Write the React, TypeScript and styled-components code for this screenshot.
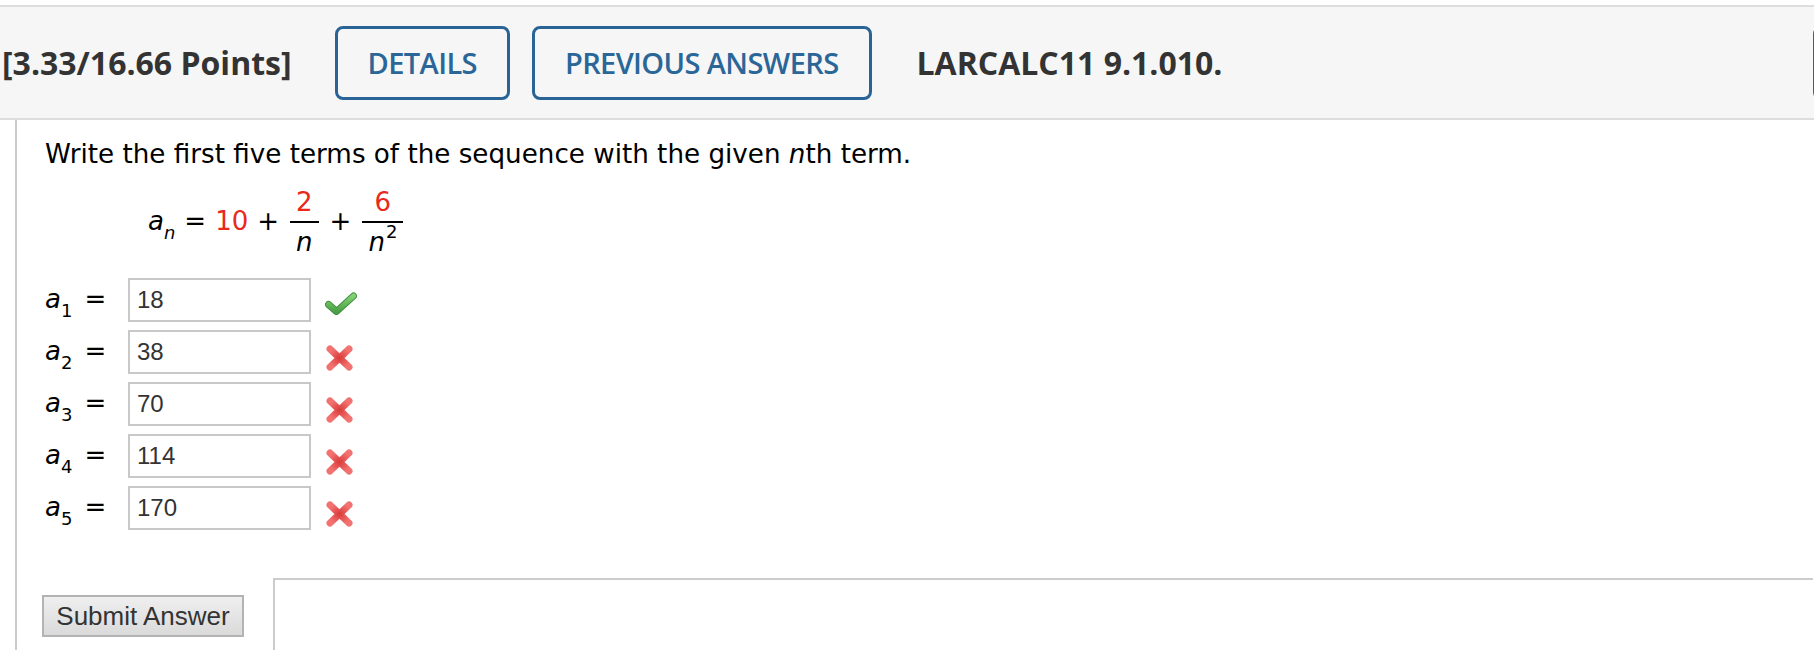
import React from "react";
import styled, { createGlobalStyle } from "styled-components";

const Global = createGlobalStyle`
  html, body { margin: 0; padding: 0; background: #ffffff; }
  body { overflow: hidden; width: 1814px; height: 650px; }
  * { box-sizing: border-box; }
`;

const Page = styled.div`
  padding-top: 5px;
  width: 1814px;
  height: 650px;
  display: flex;
  flex-direction: column;
`;

const Header = styled.div`
  height: 115px;
  flex-shrink: 0;
  background: #f6f6f6;
  border-top: 2px solid #dddddd;
  border-bottom: 2px solid #dddddd;
  display: flex;
  align-items: center;
  padding-left: 2px;
  overflow: hidden;
  font-family: "Open Sans", "Liberation Sans", sans-serif;
`;

const HeaderTitle = styled.div<{ $gap?: number }>`
  font-size: 32px;
  font-weight: 700;
  color: #333333;
  white-space: nowrap;
  flex-shrink: 0;
  margin-left: ${(p) => p.$gap ?? 0}px;
`;

const OutlineButton = styled.button<{ $gap: number; $width?: number }>`
  flex-shrink: 0;
  margin-left: ${(p) => p.$gap}px;
  ${(p) => (p.$width ? `width: ${p.$width}px;` : "")}
  height: 74px;
  padding: 0 30px;
  border: 3px solid #2a6496;
  border-radius: 8px;
  background: transparent;
  color: #2b6698;
  font-family: "Open Sans", "Liberation Sans", sans-serif;
  font-size: 29px;
  font-weight: 600;
  letter-spacing: -0.6px;
  white-space: nowrap;
`;

const Body = styled.div`
  flex: 1;
  margin-left: 15px;
  border-left: 2px solid #cccccc;
  padding-left: 28px;
  display: flex;
  flex-direction: column;
  font-family: "DejaVu Sans", Verdana, sans-serif;
  color: #000000;
`;

const Prompt = styled.p`
  margin: 18px 0 0 0;
  font-size: 26.2px;
  line-height: 32px;
  white-space: nowrap;
`;

const Formula = styled.div`
  margin: 18px 0 0 103px;
  font-size: 26px;
  line-height: 30px;
  white-space: nowrap;
`;

const Var = styled.i`
  font-style: italic;
`;

const Sub = styled.sub`
  font-size: 18px;
  font-style: italic;
  vertical-align: -9px;
  line-height: 0;
`;

const NumSub = styled.sub`
  font-size: 18px;
  vertical-align: -9px;
  line-height: 0;
`;

const Sup = styled.sup`
  font-size: 18px;
  font-style: normal;
  vertical-align: 13px;
  line-height: 0;
  margin-left: 1px;
`;

const Red = styled.span`
  color: #e8291c;
`;

const Op = styled.span`
  margin: 0 9px;
`;

const Frac = styled.span`
  display: inline-flex;
  flex-direction: column;
  align-items: center;
  vertical-align: middle;
  margin: 0 2px;
`;

const Num = styled.span`
  font-size: 26px;
  line-height: 28px;
  padding: 0 6px 5px;
  color: #e8291c;
`;

const Bar = styled.span`
  align-self: stretch;
  height: 2px;
  background: #000000;
`;

const Den = styled.span`
  font-size: 26px;
  line-height: 28px;
  padding: 5px 6px 0;
  font-style: italic;
`;

const Rows = styled.div`
  margin-top: 22px;
  display: flex;
  flex-direction: column;
  gap: 8px;
`;

const Row = styled.div`
  display: flex;
  align-items: baseline;
`;

const Label = styled.span`
  width: 83px;
  flex-shrink: 0;
  font-size: 26px;
  white-space: nowrap;
`;

const Eq = styled.span`
  margin-left: 12px;
`;

const AnswerInput = styled.input`
  width: 183px;
  height: 44px;
  border: 2px solid #c8c8c8;
  padding: 0 7px;
  font-family: "Liberation Sans", Arial, sans-serif;
  font-size: 24px;
  color: #333333;
  background: #ffffff;
  outline: none;
`;

const Mark = styled.span<{ $dy: number }>`
  align-self: center;
  margin-left: 14px;
  margin-top: ${(p) => p.$dy}px;
  display: flex;
`;

const Footer = styled.div`
  margin-top: 48px;
  display: flex;
  align-items: flex-start;
  flex: 1;
`;

const SubmitButton = styled.button`
  margin: 17px 0 0 -3px;
  width: 202px;
  height: 42px;
  flex-shrink: 0;
  border: 2px solid #b3b3b3;
  background: linear-gradient(#efefef, #dadada);
  font-family: "Liberation Sans", Arial, sans-serif;
  font-size: 26px;
  color: #333333;
  padding: 0;
`;

const ResponseBox = styled.div`
  margin-left: 29px;
  flex: 1;
  align-self: stretch;
  border-top: 2px solid #cccccc;
  border-left: 2px solid #cccccc;
  margin-right: 1px;
`;

const Check = () => (
  <svg width="32" height="23" viewBox="0 0 32 23">
    <defs>
      <linearGradient id="gck" x1="0" y1="0" x2="0" y2="1">
        <stop offset="0" stopColor="#82d274" />
        <stop offset="1" stopColor="#4c9f46" />
      </linearGradient>
    </defs>
    <path
      d="M3.5 12.5 L11.5 19.5 L28.5 4"
      fill="none"
      stroke="#3f8f3c"
      strokeWidth="7"
      strokeLinecap="round"
      strokeLinejoin="round"
    />
    <path
      d="M3.5 12.5 L11.5 19.5 L28.5 4"
      fill="none"
      stroke="url(#gck)"
      strokeWidth="5"
      strokeLinecap="round"
      strokeLinejoin="round"
    />
  </svg>
);

const Cross = () => (
  <svg width="29" height="26" viewBox="0 0 29 26">
    <defs>
      <radialGradient id="gx" cx="0.5" cy="0.5" r="0.6">
        <stop offset="0" stopColor="#d93a3a" />
        <stop offset="1" stopColor="#f27272" />
      </radialGradient>
    </defs>
    <path
      d="M5 4 L24 22 M24 4 L5 22"
      fill="none"
      stroke="url(#gx)"
      strokeWidth="7"
      strokeLinecap="round"
    />
  </svg>
);

const answers = [
  { n: "1", v: "18", ok: true },
  { n: "2", v: "38", ok: false },
  { n: "3", v: "70", ok: false },
  { n: "4", v: "114", ok: false },
  { n: "5", v: "170", ok: false },
];

export default function App() {
  return (
    <>
      <Global />
      <Page>
        <Header>
          <HeaderTitle>[3.33/16.66 Points]</HeaderTitle>
          <OutlineButton $gap={43}>DETAILS</OutlineButton>
          <OutlineButton $gap={22}>PREVIOUS ANSWERS</OutlineButton>
          <HeaderTitle $gap={45}>LARCALC11 9.1.010.</HeaderTitle>
          <OutlineButton $gap={591} $width={160} aria-label="My notes" />
        </Header>
        <Body>
          <Prompt>
            Write the first five terms of the sequence with the given <Var>n</Var>th term.
          </Prompt>
          <Formula>
            <Var>a</Var>
            <Sub>n</Sub>
            <Op>=</Op>
            <Red>10</Red>
            <Op>+</Op>
            <Frac>
              <Num>2</Num>
              <Bar />
              <Den>n</Den>
            </Frac>
            <Op>+</Op>
            <Frac>
              <Num>6</Num>
              <Bar />
              <Den>
                n<Sup>2</Sup>
              </Den>
            </Frac>
          </Formula>
          <Rows>
            {answers.map((a) => (
              <Row key={a.n}>
                <Label>
                  <Var>a</Var>
                  <NumSub>{a.n}</NumSub>
                  <Eq>=</Eq>
                </Label>
                <AnswerInput defaultValue={a.v} readOnly />
                <Mark $dy={a.ok ? 6 : 11}>{a.ok ? <Check /> : <Cross />}</Mark>
              </Row>
            ))}
          </Rows>
          <Footer>
            <SubmitButton>Submit Answer</SubmitButton>
            <ResponseBox />
          </Footer>
        </Body>
      </Page>
    </>
  );
}
